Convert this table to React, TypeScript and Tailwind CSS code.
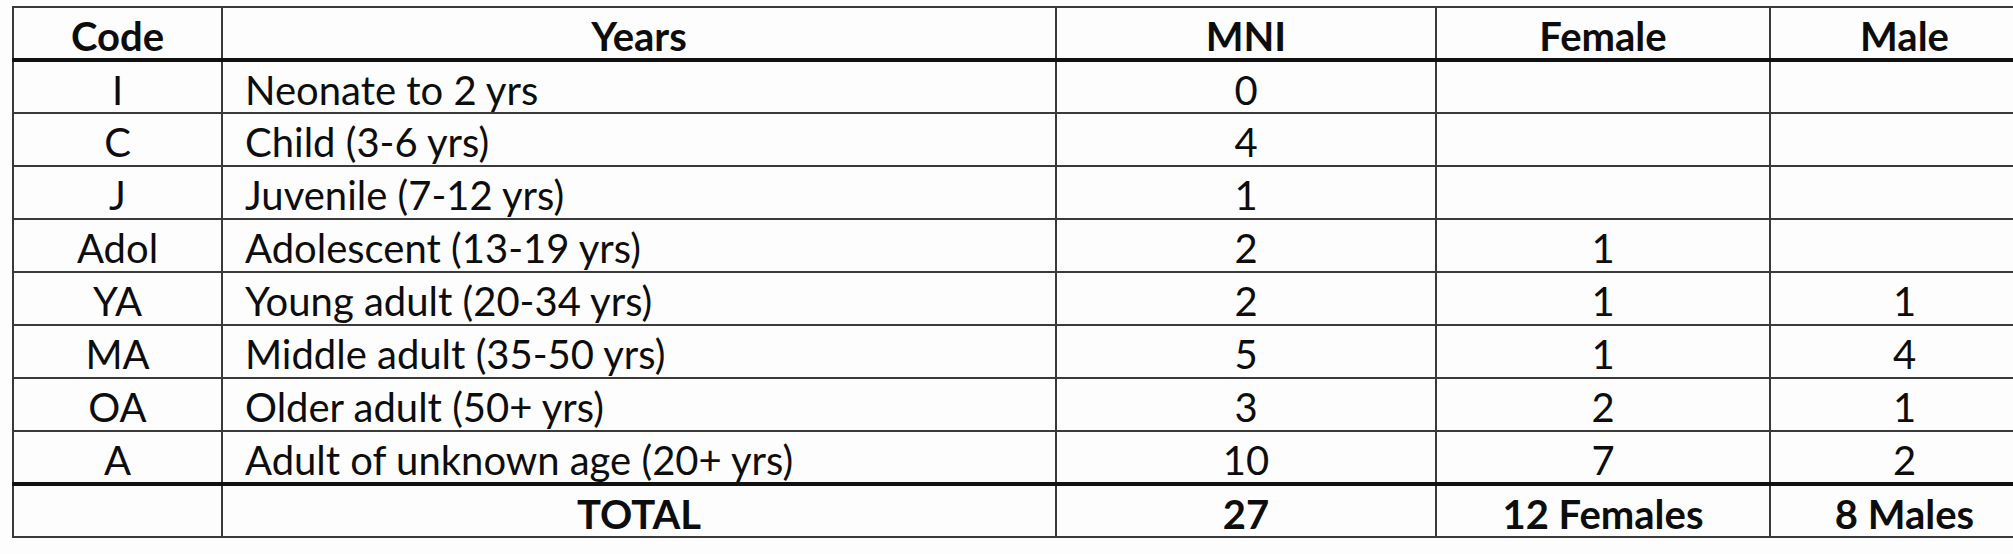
import React from "react";

// Scanned MNI table: age classes with female / male split.
// Column widths follow the scan; the Male column runs past the right edge.

type Row = { code: string; years: string; mni: string; female: string; male: string };

const rows: Row[] = [
  { code: "I", years: "Neonate to 2 yrs", mni: "0", female: "", male: "" },
  { code: "C", years: "Child (3-6 yrs)", mni: "4", female: "", male: "" },
  { code: "J", years: "Juvenile (7-12 yrs)", mni: "1", female: "", male: "" },
  { code: "Adol", years: "Adolescent (13-19 yrs)", mni: "2", female: "1", male: "" },
  { code: "YA", years: "Young adult (20-34 yrs)", mni: "2", female: "1", male: "1" },
  { code: "MA", years: "Middle adult (35-50 yrs)", mni: "5", female: "1", male: "4" },
  { code: "OA", years: "Older adult (50+ yrs)", mni: "3", female: "2", male: "1" },
  { code: "A", years: "Adult of unknown age (20+ yrs)", mni: "10", female: "7", male: "2" },
];

const cell = "border-2 border-[#3a3a3a] px-0 pt-[5px] pb-0 align-middle";
const thick = "border-b-[4px] border-b-[#111]";

export default function App() {
  return (
    <div
      className="w-[2013px] h-[554px] overflow-hidden bg-[#fdfdfd] pl-[12px] pt-[6px] text-[#0d0d0d]"
      style={{ fontFamily: "Lato, 'Liberation Sans', sans-serif" }}
    >
      <table className="table-fixed border-collapse w-[2026px] text-[40px] leading-none">
        <colgroup>
          <col className="w-[209px]" />
          <col className="w-[834px]" />
          <col className="w-[380px]" />
          <col className="w-[334px]" />
          <col className="w-[269px]" />
        </colgroup>
        <thead>
          <tr className="h-[53px] font-bold">
            <th className={`${cell} ${thick} text-center`}>Code</th>
            <th className={`${cell} ${thick} text-center`}>Years</th>
            <th className={`${cell} ${thick} text-center`}>MNI</th>
            <th className={`${cell} ${thick} text-center`}>Female</th>
            <th className={`${cell} ${thick} text-center`}>Male</th>
          </tr>
        </thead>
        <tbody>
          {rows.map((r, i) => {
            const last = i === rows.length - 1 ? thick : "";
            return (
              <tr key={r.code} className="h-[53px]">
                <td className={`${cell} ${last} text-center`}>{r.code}</td>
                <td className={`${cell} ${last} pl-[22px] text-left`}>{r.years}</td>
                <td className={`${cell} ${last} text-center`}>{r.mni}</td>
                <td className={`${cell} ${last} text-center`}>{r.female}</td>
                <td className={`${cell} ${last} text-center`}>{r.male}</td>
              </tr>
            );
          })}
          <tr className="h-[53px] font-bold">
            <td className={cell}></td>
            <td className={`${cell} text-center`}>TOTAL</td>
            <td className={`${cell} text-center`}>27</td>
            <td className={`${cell} text-center`}>12 Females</td>
            <td className={`${cell} text-center`}>8 Males</td>
          </tr>
        </tbody>
      </table>
    </div>
  );
}
